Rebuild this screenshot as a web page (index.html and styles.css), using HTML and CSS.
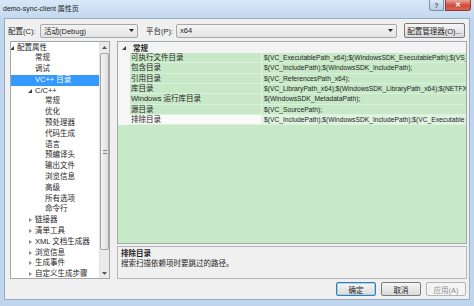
FILE: index.html
```html
<!DOCTYPE html>
<html>
  <head>
    <meta charset="utf-8" />
    <link rel="stylesheet" href="styles.css">
  </head>
  <body>
    <div class="window">
      <div class="titlebar">
        <span class="title">demo-sync-client 属性页</span>
        <div class="caption">
          <span class="cap help">?</span>
          <span class="cap close">✕</span>
        </div>
      </div>

      <div class="client">
        <!-- configuration / platform row -->
        <div class="toolbar">
          <span class="lbl cfg-lbl">配置(C):</span>
          <div class="combo combo-cfg">
            <span class="combo-text">活动(Debug)</span>
            <svg class="drop" width="5" height="3" viewBox="0 0 5 3"><polygon points="0,0 5,0 2.5,3" fill="#222"/></svg>
          </div>
          <span class="lbl plat-lbl">平台(P):</span>
          <div class="combo combo-plat">
            <span class="combo-text">x64</span>
            <svg class="drop" width="5" height="3" viewBox="0 0 5 3"><polygon points="0,0 5,0 2.5,3" fill="#222"/></svg>
          </div>
          <div class="btn mgr">配置管理器(O)...</div>
        </div>

        <div class="main">
          <!-- left tree -->
          <div class="tree">
            <div class="items">
              <div class="node lvl0"><span class="exp open"></span>配置属性</div>
              <div class="node lvl1">常规</div>
              <div class="node lvl1">调试</div>
              <div class="node lvl1 selected">VC++ 目录</div>
              <div class="node lvl1"><span class="exp open"></span>C/C++</div>
              <div class="node lvl2">常规</div>
              <div class="node lvl2">优化</div>
              <div class="node lvl2">预处理器</div>
              <div class="node lvl2">代码生成</div>
              <div class="node lvl2">语言</div>
              <div class="node lvl2">预编译头</div>
              <div class="node lvl2">输出文件</div>
              <div class="node lvl2">浏览信息</div>
              <div class="node lvl2">高级</div>
              <div class="node lvl2">所有选项</div>
              <div class="node lvl2">命令行</div>
              <div class="node lvl1"><span class="exp closed"></span>链接器</div>
              <div class="node lvl1"><span class="exp closed"></span>清单工具</div>
              <div class="node lvl1"><span class="exp closed"></span>XML 文档生成器</div>
              <div class="node lvl1"><span class="exp closed"></span>浏览信息</div>
              <div class="node lvl1"><span class="exp closed"></span>生成事件</div>
              <div class="node lvl1"><span class="exp closed"></span>自定义生成步骤</div>
            </div>
            <div class="vscroll">
              <div class="sb-arrow">
                <svg width="5" height="3" viewBox="0 0 5 3"><polygon points="0,3 5,3 2.5,0" fill="#555"/></svg>
              </div>
              <div class="sb-thumb"><span class="grip"></span></div>
              <div class="sb-track"></div>
              <div class="sb-arrow">
                <svg width="5" height="3" viewBox="0 0 5 3"><polygon points="0,0 5,0 2.5,3" fill="#555"/></svg>
              </div>
            </div>
          </div>

          <!-- property grid + description -->
          <div class="right">
            <div class="grid">
              <div class="cat"><span class="exp open"></span><b>常规</b></div>
              <div class="prop"><span class="gut"></span><span class="name">可执行文件目录</span><span class="val">$(VC_ExecutablePath_x64);$(WindowsSDK_ExecutablePath);$(VS_</span></div>
              <div class="prop"><span class="gut"></span><span class="name">包含目录</span><span class="val">$(VC_IncludePath);$(WindowsSDK_IncludePath);</span></div>
              <div class="prop"><span class="gut"></span><span class="name">引用目录</span><span class="val">$(VC_ReferencesPath_x64);</span></div>
              <div class="prop"><span class="gut"></span><span class="name">库目录</span><span class="val">$(VC_LibraryPath_x64);$(WindowsSDK_LibraryPath_x64);$(NETFX</span></div>
              <div class="prop"><span class="gut"></span><span class="name">Windows 运行库目录</span><span class="val">$(WindowsSDK_MetadataPath);</span></div>
              <div class="prop"><span class="gut"></span><span class="name">源目录</span><span class="val">$(VC_SourcePath);</span></div>
              <div class="prop current"><span class="gut"></span><span class="name">排除目录</span><span class="val">$(VC_IncludePath);$(WindowsSDK_IncludePath);$(VC_Executable</span></div>
              <div class="filler"></div>
            </div>
            <div class="desc">
              <div class="desc-title">排除目录</div>
              <div class="desc-text">搜索扫描依赖项时要跳过的路径。</div>
            </div>
          </div>
        </div>

        <div class="footer">
          <div class="btn ok">确定</div>
          <div class="btn">取消</div>
          <div class="btn disabled">应用(A)</div>
        </div>
      </div>
    </div>
  </body>
</html>
```

FILE: styles.css
```css
body {
  margin: 0;
  font-family: "Liberation Sans", "Noto Sans CJK SC", sans-serif;
  font-size: 7.5px;
  color: #1e1e1e;
}

.window {
  width: 474px;
  height: 306px;
  background: #bfd6ee;
  display: flex;
  flex-direction: column;
  overflow: hidden;
}

/* ---------- title bar ---------- */
.titlebar {
  height: 18px;
  display: flex;
  align-items: flex-start;
  justify-content: space-between;
  background: linear-gradient(180deg, #d8e7f6 0%, #c3d9f0 100%);
}

.title {
  font-size: 7px;
  line-height: 18px;
  padding-left: 3px;
  color: #222;
}

.caption {
  display: flex;
  gap: 1px;
  margin-right: 3px;
}

.cap {
  height: 11px;
  display: flex;
  align-items: center;
  justify-content: center;
  color: #fff;
  font-size: 7px;
  font-weight: bold;
  border: 1px solid #7c93ad;
  border-top: 0;
  box-sizing: border-box;
}

.help {
  width: 15px;
  border-radius: 0 0 0 3px;
  background: linear-gradient(180deg, #dde9f5 0%, #b9cde4 100%);
  color: #4a5d74;
}

.close {
  width: 26px;
  border-color: #8d3a3a;
  border-radius: 0 0 3px 0;
  background: linear-gradient(180deg, #eba596 0%, #cf4b3d 55%, #d8664f 100%);
}

/* ---------- client area ---------- */
.client {
  flex: 1;
  margin: 0 4px 6px 4px;
  border: 1px solid #97adc6;
  background: #f0f0f0;
  display: flex;
  flex-direction: column;
}

.toolbar {
  display: flex;
  align-items: center;
  height: 15px;
  margin-top: 4px;
  padding-left: 3px;
}

.lbl {
  white-space: nowrap;
}

.cfg-lbl {
  width: 32px;
}

.plat-lbl {
  width: 30px;
  margin-left: 8px;
}

.combo {
  height: 14px;
  box-sizing: border-box;
  border: 1px solid #a8a8a8;
  border-radius: 2px;
  background: linear-gradient(180deg, #f4f4f4 0%, #e4e4e4 100%);
  display: flex;
  align-items: center;
  justify-content: space-between;
  padding: 0 3px 0 3px;
}

.combo-cfg {
  width: 98px;
}

.combo-plat {
  width: 221px;
}

.drop {
  flex: none;
}

.btn {
  height: 14px;
  box-sizing: border-box;
  border: 1px solid #7a7a7a;
  border-radius: 2px;
  background: linear-gradient(180deg, #f6f6f6 0%, #e8e8e8 50%, #d9d9d9 100%);
  display: flex;
  align-items: center;
  justify-content: center;
  white-space: nowrap;
}

.mgr {
  width: 61px;
  height: 15px;
  margin-left: 7px;
}

/* ---------- main ---------- */
.main {
  display: flex;
  margin-top: 3px;
  height: 238px;
  padding-left: 5px;
}

.tree {
  width: 100px;
  box-sizing: border-box;
  border: 1px solid #a3a8ae;
  background: #fff;
  display: flex;
}

.items {
  flex: 1;
  overflow: hidden;
  padding-top: 0.5px;
}

.node {
  height: 10.8px;
  line-height: 10.8px;
  display: flex;
  align-items: center;
  white-space: nowrap;
}

.lvl0 {
  padding-left: 6px;
}

.lvl1 {
  padding-left: 24px;
}

.lvl2 {
  padding-left: 34px;
}

.lvl0 .exp,
.lvl1 .exp {
  margin-left: -8px;
}

.exp {
  width: 8px;
  height: 8px;
  flex: none;
  position: relative;
}

.exp.open::after {
  content: "";
  position: absolute;
  left: 1px;
  top: 2px;
  border-style: solid;
  border-width: 0 0 4px 4px;
  border-color: transparent transparent #3c3c3c transparent;
}

.exp.closed::after {
  content: "";
  position: absolute;
  left: 2px;
  top: 1.5px;
  border-style: solid;
  border-width: 2.5px 0 2.5px 3.5px;
  border-color: transparent transparent transparent #8a8a8a;
}

.selected {
  background: #3399ff;
  color: #fff;
}

.vscroll {
  width: 9px;
  border-left: 1px solid #e3e3e3;
  background: #eaeaea;
  display: flex;
  flex-direction: column;
}

.sb-arrow {
  height: 10px;
  display: flex;
  align-items: center;
  justify-content: center;
}

.sb-thumb {
  height: 195px;
  margin: 1px 0;
  border: 1px solid #a5a5a5;
  border-radius: 2px;
  background: linear-gradient(90deg, #f4f4f4 0%, #dedede 100%);
  display: flex;
  align-items: center;
  justify-content: center;
}

.grip {
  width: 4px;
  height: 4px;
  border-top: 1px solid #7d7d7d;
  border-bottom: 1px solid #7d7d7d;
  box-sizing: border-box;
}

.sb-track {
  flex: 1;
}

.right {
  width: 350px;
  margin-left: 7px;
  display: flex;
  flex-direction: column;
}

.grid {
  height: 205px;
  box-sizing: border-box;
  border: 1px solid #a3a8ae;
  background: #f6f6f6;
  display: flex;
  flex-direction: column;
  overflow: hidden;
}

.cat {
  height: 11px;
  display: flex;
  align-items: center;
  padding-left: 3px;
  background: #f3f3f3;
}

.cat .exp {
  margin-right: 4px;
}

.prop {
  height: 10.35px;
  display: grid;
  grid-template-columns: 12px 132px 1fr;
  white-space: nowrap;
}

.prop span {
  line-height: 10.35px;
  overflow: hidden;
}

.gut {
  background: #f6f6f6;
}

.name {
  background: #c8e9c8;
  padding-left: 1px;
  border-bottom: 1px solid #dcf1dc;
  border-right: 1px solid #e4f4e4;
  box-sizing: border-box;
}

.val {
  background: #c8e9c8;
  padding-left: 2px;
  font-size: 6.7px;
  border-bottom: 1px solid #dcf1dc;
  box-sizing: border-box;
}

.current .name {
  background: #fafafa;
}

.current .val {
  background: #e0f2e0;
}

.filler {
  flex: 1;
  background: #c8e9c8;
}

.desc {
  margin-top: 2px;
  height: 33px;
  box-sizing: border-box;
  border: 1px solid #b3b8be;
  background: #f0f0f0;
  padding: 2px 3px;
}

.desc-title {
  font-weight: bold;
  line-height: 10px;
}

.desc-text {
  line-height: 10px;
}

/* ---------- footer buttons ---------- */
.footer {
  flex: 1;
  display: flex;
  justify-content: flex-end;
  align-items: center;
  gap: 5px;
  padding-right: 3px;
}

.footer .btn {
  width: 40px;
}

.ok {
  border-color: #3d7bad;
  box-shadow: inset 0 0 0 1px #9fd6f4;
}

.disabled {
  border-color: #b5b5b5;
  background: #f4f4f4;
  color: #8f8f8f;
}
```
